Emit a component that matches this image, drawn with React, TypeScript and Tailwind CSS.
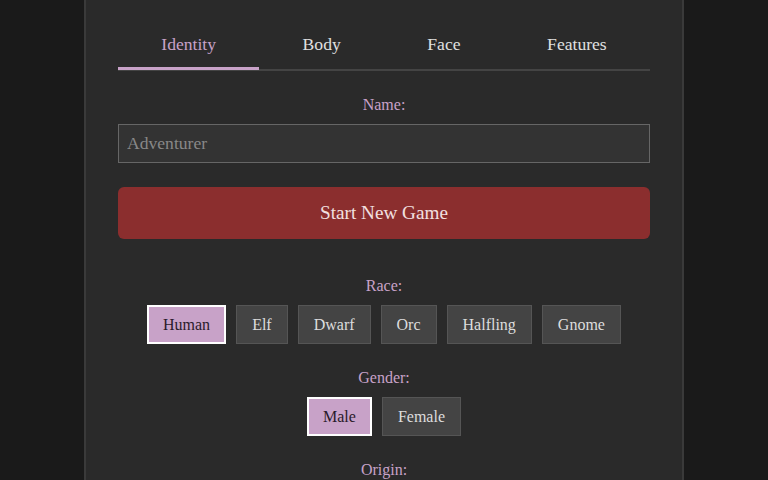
import { useState } from "react";

const tabs = ["Identity", "Body", "Face", "Features"];
const races = ["Human", "Elf", "Dwarf", "Orc", "Halfling", "Gnome"];
const genders = ["Male", "Female"];

function Choice({ label, active, onClick }: { label: string; active: boolean; onClick: () => void }) {
  return (
    <button
      onClick={onClick}
      className={
        active
          ? "border-2 border-white bg-[#c8a2c8] px-[14px] py-[8px] text-[16px] leading-[19px] text-[#2a1a2a]"
          : "border border-[#555] bg-[#444] px-[15px] py-[9px] text-[16px] leading-[19px] text-[#ddd]"
      }
    >
      {label}
    </button>
  );
}

export default function App() {
  const [tab, setTab] = useState("Identity");
  const [race, setRace] = useState("Human");
  const [gender, setGender] = useState("Male");

  return (
    <div className="min-h-screen bg-[#1a1a1a] font-['Liberation_Serif',serif]">
      <div className="mx-auto w-[600px] min-h-screen border-x-2 border-[#3a3a3a] bg-[#2a2a2a] px-8 pt-[26px]">
        {/* Tabs */}
        <div className="flex border-b-2 border-[#444]">
          {tabs.map((t) => (
            <button
              key={t}
              onClick={() => setTab(t)}
              className={
                "-mb-px flex-auto border-b-[3px] px-2 pt-[8px] pb-[13px] text-[17.6px] leading-[20px] " +
                (tab === t ? "border-[#c8a2c8] text-[#c8a2c8]" : "border-transparent text-[#e0e0e0]")
              }
            >
              {t}
            </button>
          ))}
        </div>

        {/* Name */}
        <div className="mt-[25px] text-center text-[16px] leading-[18px] text-[#c8a2c8]">Name:</div>
        <input
          placeholder="Adventurer"
          className="mt-[10px] block h-[39px] w-full border border-[#666] bg-[#333] px-[8px] text-[17.6px] text-[#e0e0e0] placeholder:text-[#888] outline-none"
        />

        <button className="mt-[24px] h-[52px] w-full rounded-md bg-[#8b2e2e] text-[19.2px] text-[#f2e0e0]">
          Start New Game
        </button>

        {/* Race */}
        <div className="mt-[38px] text-center text-[16px] leading-[18px] text-[#c8a2c8]">Race:</div>
        <div className="mt-[10px] flex justify-center gap-[10px]">
          {races.map((r) => (
            <Choice key={r} label={r} active={race === r} onClick={() => setRace(r)} />
          ))}
        </div>

        {/* Gender */}
        <div className="mt-[25px] text-center text-[16px] leading-[18px] text-[#c8a2c8]">Gender:</div>
        <div className="mt-[10px] flex justify-center gap-[10px]">
          {genders.map((g) => (
            <Choice key={g} label={g} active={gender === g} onClick={() => setGender(g)} />
          ))}
        </div>

        {/* Origin */}
        <div className="mt-[25px] text-center text-[16px] leading-[18px] text-[#c8a2c8]">Origin:</div>
      </div>
    </div>
  );
}
